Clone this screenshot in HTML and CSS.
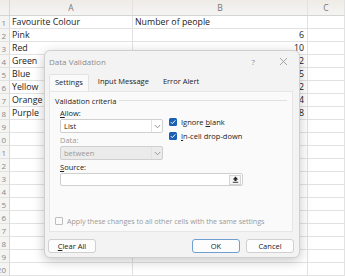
FILE: index.html
```html
<!DOCTYPE html>
<html lang="en">
<head>
    <meta charset="UTF-8">
    <title>Data Validation</title>
    <link rel="stylesheet" href="styles.css">
</head>
<body>

<div class="sheet">
    <div class="row head">
        <div class="num"></div>
        <div class="cell">A</div>
        <div class="cell">B</div>
        <div class="cell">C</div>
    </div>
    <div class="row"><div class="num"><span>1</span></div><div class="cell">Favourite Colour</div><div class="cell">Number of people</div><div class="cell"></div></div>
    <div class="row"><div class="num"><span>2</span></div><div class="cell">Pink</div><div class="cell val">6</div><div class="cell"></div></div>
    <div class="row"><div class="num"><span>3</span></div><div class="cell">Red</div><div class="cell val">10</div><div class="cell"></div></div>
    <div class="row"><div class="num"><span>4</span></div><div class="cell">Green</div><div class="cell val">2</div><div class="cell"></div></div>
    <div class="row"><div class="num"><span>5</span></div><div class="cell">Blue</div><div class="cell val">5</div><div class="cell"></div></div>
    <div class="row"><div class="num"><span>6</span></div><div class="cell">Yellow</div><div class="cell val">2</div><div class="cell"></div></div>
    <div class="row"><div class="num"><span>7</span></div><div class="cell">Orange</div><div class="cell val">4</div><div class="cell"></div></div>
    <div class="row"><div class="num"><span>8</span></div><div class="cell">Purple</div><div class="cell val">8</div><div class="cell"></div></div>
    <div class="row"><div class="num"><span>9</span></div><div class="cell"></div><div class="cell"></div><div class="cell"></div></div>
    <div class="row"><div class="num"><span>10</span></div><div class="cell"></div><div class="cell"></div><div class="cell"></div></div>
    <div class="row"><div class="num"><span>11</span></div><div class="cell"></div><div class="cell"></div><div class="cell"></div></div>
    <div class="row"><div class="num"><span>12</span></div><div class="cell"></div><div class="cell"></div><div class="cell"></div></div>
    <div class="row"><div class="num"><span>13</span></div><div class="cell"></div><div class="cell"></div><div class="cell"></div></div>
    <div class="row"><div class="num"><span>14</span></div><div class="cell"></div><div class="cell"></div><div class="cell"></div></div>
    <div class="row"><div class="num"><span>15</span></div><div class="cell"></div><div class="cell"></div><div class="cell"></div></div>
    <div class="row"><div class="num"><span>16</span></div><div class="cell"></div><div class="cell"></div><div class="cell"></div></div>
    <div class="row"><div class="num"><span>17</span></div><div class="cell"></div><div class="cell"></div><div class="cell"></div></div>
    <div class="row"><div class="num"><span>18</span></div><div class="cell"></div><div class="cell"></div><div class="cell"></div></div>
    <div class="row"><div class="num"><span>19</span></div><div class="cell"></div><div class="cell"></div><div class="cell"></div></div>
    <div class="row"><div class="num"><span>20</span></div><div class="cell"></div><div class="cell"></div><div class="cell"></div></div>
</div>

<div class="dialog">
    <div class="titlebar">
        <span class="title">Data Validation</span>
        <span class="help">?</span>
        <svg class="close" width="9" height="9" viewBox="0 0 9 9"><path d="M1 1L8 8M8 1L1 8" stroke="#9a9a9a" stroke-width="0.9" fill="none"/></svg>
    </div>

    <div class="tabs">
        <div class="tab active">Settings</div>
        <div class="tab">Input Message</div>
        <div class="tab">Error Alert</div>
    </div>

    <div class="panel">
        <div class="group-title"><span>Validation criteria</span><div class="rule"></div></div>

        <div class="criteria">
            <div class="left">
                <div class="label"><u>A</u>llow:</div>
                <div class="combo">
                    <span>List</span>
                    <span class="chev"><svg width="7" height="5" viewBox="0 0 7 5"><path d="M0.8 1L3.5 3.8L6.2 1" stroke="#777" stroke-width="0.8" fill="none"/></svg></span>
                </div>
                <div class="label muted">Data:</div>
                <div class="combo disabled">
                    <span>between</span>
                    <span class="chev"><svg width="7" height="5" viewBox="0 0 7 5"><path d="M0.8 1L3.5 3.8L6.2 1" stroke="#888" stroke-width="0.8" fill="none"/></svg></span>
                </div>
            </div>
            <div class="checks">
                <div class="check">
                    <svg width="8" height="8" viewBox="0 0 8 8"><rect width="8" height="8" rx="1.5" fill="#1a5fb4"/><path d="M1.8 4.1L3.3 5.6L6.3 2.4" stroke="#fff" stroke-width="1" fill="none"/></svg>
                    <span>Ignore <u>b</u>lank</span>
                </div>
                <div class="check">
                    <svg width="8" height="8" viewBox="0 0 8 8"><rect width="8" height="8" rx="1.5" fill="#1a5fb4"/><path d="M1.8 4.1L3.3 5.6L6.3 2.4" stroke="#fff" stroke-width="1" fill="none"/></svg>
                    <span><u>I</u>n-cell drop-down</span>
                </div>
            </div>
        </div>

        <div class="source">
            <div class="label"><u>S</u>ource:</div>
            <div class="input">
                <span class="collapse"><svg width="7" height="7" viewBox="0 0 7 7"><path d="M3.5 0.6L6.2 3.4H4.5V5H2.5V3.4H0.8Z" fill="#222"/><rect x="0.8" y="5.8" width="5.4" height="0.9" fill="#222"/></svg></span>
            </div>
        </div>

        <div class="apply">
            <span class="box"></span>
            <span>Apply these changes to all other cells with the same settings</span>
        </div>
    </div>

    <div class="buttons">
        <div class="btn"><u>C</u>lear All</div>
        <div class="spacer"></div>
        <div class="btn primary">OK</div>
        <div class="btn">Cancel</div>
    </div>
</div>

</body>
</html>
```

FILE: styles.css
```css
body {
    margin: 0;
    font-family: "Open Sans", "Noto Sans", sans-serif;
    background: #fff;
    overflow: hidden;
}

.sheet {
    width: 345px;
}

.row {
    display: grid;
    grid-template-columns: 10px 123px 175px 1fr;
    height: 13px;
}

.row .num,
.row .cell {
    box-sizing: border-box;
    border-right: 1px solid #e2e2e2;
    border-bottom: 1px solid #e2e2e2;
    overflow: hidden;
    white-space: nowrap;
}

.row .num {
    display: flex;
    justify-content: flex-end;
    align-items: center;
    padding-right: 3px;
    background: #f4f4f2;
    color: #888;
    font-size: 8px;
    border-right-color: #d8d8d8;
}

.row .cell {
    font-size: 8.8px;
    line-height: 12px;
    color: #222;
    padding-left: 2px;
}

.row .val {
    text-align: right;
    padding-right: 3px;
}

.row.head {
    height: 16px;
    background: linear-gradient(#efebe6, #f5f5f5);
}

.row.head .cell,
.row.head .num {
    background: transparent;
    color: #777;
    font-size: 8.5px;
    line-height: 15px;
    text-align: center;
    padding: 0;
    border-bottom-color: #d4d4d4;
}

.dialog {
    position: absolute;
    left: 44px;
    top: 50px;
    width: 256px;
    height: 208px;
    box-sizing: border-box;
    background: #f3f3f3;
    border: 1px solid #cfcfcf;
    border-radius: 6px;
    box-shadow: 0 3px 12px rgba(0, 0, 0, 0.22);
    font-size: 7.5px;
    color: #222;
    display: flex;
    flex-direction: column;
}

.titlebar {
    display: flex;
    align-items: center;
    height: 21px;
    padding: 0 11px 0 4px;
    color: #8c8c8c;
    font-size: 8px;
}

.title {
    flex: 1;
}

.help {
    margin-right: 24px;
    font-size: 8px;
}

.tabs {
    display: flex;
    gap: 4px;
    padding: 2px 0 0 4px;
    height: 19px;
    box-sizing: border-box;
}

.tab {
    padding: 0 5px;
    line-height: 15px;
    font-size: 7.5px;
}

.tab.active {
    background: #fafafa;
    border: 1px solid #e2e2e2;
    border-bottom: none;
    border-radius: 2px 2px 0 0;
    padding: 0 5px;
}

.panel {
    margin: 0 6px 0 4px;
    height: 141px;
    box-sizing: border-box;
    background: #fafafa;
    border: 1px solid #e6e6e6;
    padding: 3px 5px 0 5px;
    display: flex;
    flex-direction: column;
}

.group-title {
    display: flex;
    align-items: center;
    gap: 3px;
    height: 11px;
}

.rule {
    flex: 1;
    height: 1px;
    background: #e0e0e0;
}

.criteria {
    display: flex;
    padding-left: 5px;
}

.left {
    width: 103px;
}

.label {
    height: 11px;
    line-height: 11px;
    margin-top: 2px;
}

.muted {
    color: #9a9a9a;
}

.combo {
    display: flex;
    align-items: center;
    height: 14px;
    box-sizing: border-box;
    background: #fff;
    border: 1px solid #cfcfcf;
    border-radius: 2px;
    padding-left: 3px;
}

.combo span:first-child {
    flex: 1;
}

.combo .chev {
    display: flex;
    align-items: center;
    justify-content: center;
    width: 10px;
    height: 12px;
    border-left: 1px solid #e2e2e2;
}

.combo.disabled {
    background: #ebebeb;
    color: #9a9a9a;
}

.checks {
    margin-left: 6px;
    padding-top: 9px;
}

.check {
    display: flex;
    align-items: center;
    gap: 4px;
    height: 14px;
}

.source {
    padding-left: 5px;
}

.input {
    display: flex;
    justify-content: flex-end;
    align-items: center;
    width: 183px;
    height: 13px;
    box-sizing: border-box;
    background: #fff;
    border: 1px solid #cfcfcf;
    border-radius: 2px;
    padding-right: 1px;
}

.collapse {
    display: flex;
    align-items: center;
    justify-content: center;
    width: 12px;
    height: 10px;
    box-sizing: border-box;
    border: 1px solid #d4d4d4;
    background: #f6f6f6;
}

.apply {
    display: flex;
    align-items: center;
    gap: 4px;
    margin-top: 30px;
    color: #9a9a9a;
    font-size: 7.2px;
    letter-spacing: -0.05px;
}

.apply .box {
    width: 6px;
    height: 6px;
    border: 1px solid #bdbdbd;
    border-radius: 1px;
    background: #fafafa;
}

.buttons {
    display: flex;
    gap: 6px;
    padding: 7px 5px 0 3px;
}

.spacer {
    flex: 1;
}

.btn {
    width: 48px;
    height: 14px;
    box-sizing: border-box;
    background: #fdfdfd;
    border: 1px solid #d0d0d0;
    border-radius: 3px;
    text-align: center;
    line-height: 12px;
}

.btn.primary {
    border-color: #6f9fd0;
}
```
